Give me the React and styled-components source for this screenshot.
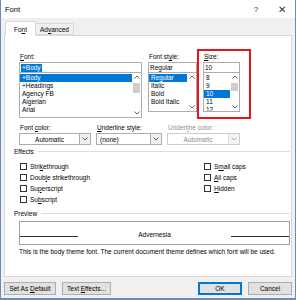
import React from "react";
import styled, { createGlobalStyle } from "styled-components";

const GlobalStyle = createGlobalStyle`
  html, body { margin: 0; padding: 0; background: #fff; }
  body {
    font-family: "Liberation Sans", Arial, sans-serif;
    font-size: 6.5px;
    color: #000;
  }
  * { box-sizing: border-box; }
`;

const Window = styled.div`
  width: 296px;
  height: 300px;
  border: 1px solid #6b8db5;
  border-top: none;
  border-bottom-width: 2px;
  background: #f0f0f0;
  display: flex;
  flex-direction: column;
`;

const TitleBar = styled.div`
  height: 18px;
  background: #fff;
  display: flex;
  align-items: center;
  padding: 0 0 0 4px;
  font-size: 7.5px;
`;

const TitleText = styled.div`
  flex: 1;
`;

const TitleButton = styled.div`
  width: 26px;
  text-align: center;
  font-size: ${(p) => p.$size || 8}px;
  color: #333;
`;

const Body = styled.div`
  padding: 3px 3px 0 3px;
  display: flex;
  flex-direction: column;
`;

const TabStrip = styled.div`
  height: 14px;
  display: flex;
  align-items: flex-end;
  padding-left: 1px;
`;

const Tab = styled.div`
  width: ${(p) => p.$w}px;
  height: ${(p) => (p.$active ? 15 : 12)}px;
  margin-bottom: ${(p) => (p.$active ? -1 : 0)}px;
  display: flex;
  align-items: center;
  justify-content: center;
  background: ${(p) => (p.$active ? "#fff" : "#f0f0f0")};
  border: 1px solid #d9d9d9;
  border-bottom: ${(p) => (p.$active ? "none" : "1px solid #d9d9d9")};
  border-left: ${(p) => (p.$active ? "1px solid #d9d9d9" : "none")};
  position: relative;
  z-index: ${(p) => (p.$active ? 1 : 0)};
`;

const Panel = styled.div`
  height: 242px;
  background: #fff;
  border: 1px solid #d9d9d9;
  padding: 17px 0 0 14px;
  display: flex;
  flex-direction: column;
`;

const Key = styled.span`
  text-decoration: underline;
  text-underline-offset: 1px;
`;

const TopGrid = styled.div`
  display: grid;
  grid-template-columns: 123px 49px 37px;
  column-gap: 6px;
  align-items: start;
`;

const Column = styled.div`
  display: flex;
  flex-direction: column;
`;

const Label = styled.div`
  height: 9px;
  line-height: 8px;
  color: ${(p) => (p.$disabled ? "#8d8d8d" : "#000")};
  padding-left: 1px;
`;

const TextBox = styled.div`
  height: 11px;
  border: 1px solid #abadb3;
  background: #fff;
  padding: 0 1px;
  display: flex;
  align-items: center;
`;

const Selected = styled.span`
  background: #0078d7;
  color: #fff;
  padding: 0 1px;
  line-height: 8px;
`;

const ListBox = styled.div`
  height: ${(p) => p.$h}px;
  border: 1px solid #abadb3;
  border-top: none;
  background: #fff;
  display: flex;
  overflow: hidden;
`;

const Items = styled.div`
  flex: 1;
  display: flex;
  flex-direction: column;
  padding-top: 1px;
`;

const Item = styled.div`
  height: 8px;
  line-height: 8px;
  padding-left: 2px;
  flex-shrink: 0;
  background: ${(p) => (p.$sel ? "#0078d7" : "transparent")};
  color: ${(p) => (p.$sel ? "#fff" : "#000")};
`;

const ScrollBar = styled.div`
  width: 9px;
  display: flex;
  flex-direction: column;
  align-items: center;
  background: #fff;
`;

const Arrow = styled.div`
  height: 8px;
  width: 100%;
  display: flex;
  align-items: center;
  justify-content: center;
`;

const Thumb = styled.div`
  width: 7px;
  height: ${(p) => p.$h}px;
  margin-top: ${(p) => p.$top}px;
  background: #cdcdcd;
`;

const Track = styled.div`
  flex: 1;
`;

const SizeFrame = styled.div`
  margin: -4px -11px 0 -6px;
  padding: 2px 9px 5px 4px;
  border: 2px solid #e2141e;
`;

const ColorRow = styled.div`
  display: grid;
  grid-template-columns: 72px 66px 73px;
  column-gap: 5px;
  margin-top: 5px;
`;

const Dropdown = styled.div`
  height: 12px;
  border: 1px solid ${(p) => (p.$disabled ? "#cccccc" : "#abadb3")};
  background: #fff;
  display: flex;
  color: ${(p) => (p.$disabled ? "#8d8d8d" : "#000")};
`;

const DropText = styled.div`
  flex: 1;
  display: flex;
  align-items: center;
  justify-content: ${(p) => (p.$center ? "center" : "flex-start")};
  padding-left: ${(p) => (p.$center ? 0 : 3)}px;
`;

const DropButton = styled.div`
  width: 11px;
  border-left: 1px solid ${(p) => (p.$disabled ? "#dddddd" : "#abadb3")};
  background: ${(p) => (p.$disabled ? "#f4f4f4" : "#f0f0f0")};
  display: flex;
  align-items: center;
  justify-content: center;
`;

const GroupHead = styled.div`
  display: flex;
  align-items: center;
  gap: 4px;
  margin-left: -5px;
  margin-right: 1px;
  height: 9px;
  margin-top: ${(p) => p.$top}px;
`;

const Rule = styled.div`
  flex: 1;
  height: 1px;
  background: #dcdcdc;
`;

const Effects = styled.div`
  display: grid;
  grid-template-columns: 185px 1fr;
  margin-top: 6px;
`;

const CheckList = styled.div`
  display: flex;
  flex-direction: column;
  gap: 3px;
  padding-left: ${(p) => p.$left || 0}px;
`;

const CheckRow = styled.div`
  height: 8px;
  display: flex;
  align-items: center;
  gap: 3px;
`;

const Box = styled.div`
  width: 7px;
  height: 7px;
  border: 1px solid #333;
  background: #fff;
`;

const PreviewBox = styled.div`
  width: 271px;
  height: 24px;
  margin-top: 3px;
  border: 1px solid #a0a0a0;
  display: flex;
  align-items: center;
  padding-top: 3px;
`;

const PreviewLine = styled.div`
  width: 58px;
  height: 1px;
  background: #333;
  margin-top: 4px;
`;

const PreviewText = styled.div`
  flex: 1;
  text-align: center;
`;

const Note = styled.div`
  margin-top: 3px;
  line-height: 8px;
  white-space: nowrap;
`;

const Footer = styled.div`
  display: flex;
  padding: 5px 3px 0 3px;
  gap: 6px;
`;

const Button = styled.div`
  width: ${(p) => p.$w}px;
  height: 13px;
  background: #e1e1e1;
  border: 1px solid ${(p) => (p.$primary ? "#0078d7" : "#adadad")};
  box-shadow: ${(p) => (p.$primary ? "inset 0 0 0 1px #0078d7" : "none")};
  display: flex;
  align-items: center;
  justify-content: center;
  margin-left: ${(p) => p.$push || 0}px;
`;

const Chevron = ({ up, color = "#606060" }) => (
  <svg width="6" height="4" viewBox="0 0 6 4">
    <polyline
      points={up ? "0.5,3.5 3,1 5.5,3.5" : "0.5,0.5 3,3 5.5,0.5"}
      fill="none"
      stroke={color}
      strokeWidth="1"
    />
  </svg>
);

const List = ({ h, items, sel, thumbTop, thumbH }) => (
  <ListBox $h={h}>
    <Items>
      {items.map((it) => (
        <Item key={it} $sel={it === sel}>
          {it}
        </Item>
      ))}
    </Items>
    <ScrollBar>
      <Arrow>
        <Chevron up />
      </Arrow>
      {thumbH ? <Thumb $top={thumbTop} $h={thumbH} /> : null}
      <Track />
      <Arrow>
        <Chevron />
      </Arrow>
    </ScrollBar>
  </ListBox>
);

const Select = ({ value, center, disabled }) => (
  <Dropdown $disabled={disabled}>
    <DropText $center={center}>{value}</DropText>
    <DropButton $disabled={disabled}>
      <Chevron color={disabled ? "#b0b0b0" : "#606060"} />
    </DropButton>
  </Dropdown>
);

const Check = ({ children }) => (
  <CheckRow>
    <Box />
    <span>{children}</span>
  </CheckRow>
);

export default function App() {
  return (
    <>
      <GlobalStyle />
      <Window>
        <TitleBar>
          <TitleText>Font</TitleText>
          <TitleButton>?</TitleButton>
          <TitleButton $size={10}>✕</TitleButton>
        </TitleBar>
        <Body>
          <TabStrip>
            <Tab $active $w={31}>
              <span>
                Fo<Key>n</Key>t
              </span>
            </Tab>
            <Tab $w={38}>
              <span>
                Ad<Key>v</Key>anced
              </span>
            </Tab>
          </TabStrip>
          <Panel>
            <TopGrid>
              <Column>
                <Label>
                  <Key>F</Key>ont:
                </Label>
                <TextBox>
                  <Selected>+Body</Selected>
                </TextBox>
                <List
                  h={45}
                  items={["+Body", "+Headings", "Agency FB", "Algerian", "Arial"]}
                  sel="+Body"
                  thumbTop={2}
                  thumbH={10}
                />
              </Column>
              <Column>
                <Label>
                  Font st<Key>y</Key>le:
                </Label>
                <TextBox>Regular</TextBox>
                <List h={39} items={["Regular", "Italic", "Bold", "Bold Italic"]} sel="Regular" />
              </Column>
              <SizeFrame>
                <Column>
                  <Label>
                    <Key>S</Key>ize:
                  </Label>
                  <TextBox>10</TextBox>
                  <List
                    h={39}
                    items={["8", "9", "10", "11", "12"]}
                    sel="10"
                    thumbTop={2}
                    thumbH={8}
                  />
                </Column>
              </SizeFrame>
            </TopGrid>
            <ColorRow>
              <Column>
                <Label>
                  Font <Key>c</Key>olor:
                </Label>
                <Select value="Automatic" center />
              </Column>
              <Column>
                <Label>
                  <Key>U</Key>nderline style:
                </Label>
                <Select value="(none)" />
              </Column>
              <Column>
                <Label $disabled>
                  Underl<Key>i</Key>ne color:
                </Label>
                <Select value="Automatic" center disabled />
              </Column>
            </ColorRow>
            <GroupHead $top={2}>
              Effects
              <Rule />
            </GroupHead>
            <Effects>
              <CheckList $left={1}>
                <Check>
                  Stri<Key>k</Key>ethrough
                </Check>
                <Check>
                  Doub<Key>l</Key>e strikethrough
                </Check>
                <Check>
                  Su<Key>p</Key>erscript
                </Check>
                <Check>
                  Su<Key>b</Key>script
                </Check>
              </CheckList>
              <CheckList>
                <Check>
                  S<Key>m</Key>all caps
                </Check>
                <Check>
                  <Key>A</Key>ll caps
                </Check>
                <Check>
                  <Key>H</Key>idden
                </Check>
              </CheckList>
            </Effects>
            <GroupHead $top={6}>
              Preview
              <Rule />
            </GroupHead>
            <PreviewBox>
              <PreviewLine />
              <PreviewText>Advernesia</PreviewText>
              <PreviewLine />
            </PreviewBox>
            <Note>
              This is the body theme font. The current document theme defines which font will be
              used.
            </Note>
          </Panel>
        </Body>
        <Footer>
          <Button $w={52}>
            <span>
              Set As <Key>D</Key>efault
            </span>
          </Button>
          <Button $w={49}>
            <span>
              Text <Key>E</Key>ffects...
            </span>
          </Button>
          <Button $w={44} $primary $push={81}>
            OK
          </Button>
          <Button $w={44}>Cancel</Button>
        </Footer>
      </Window>
    </>
  );
}
